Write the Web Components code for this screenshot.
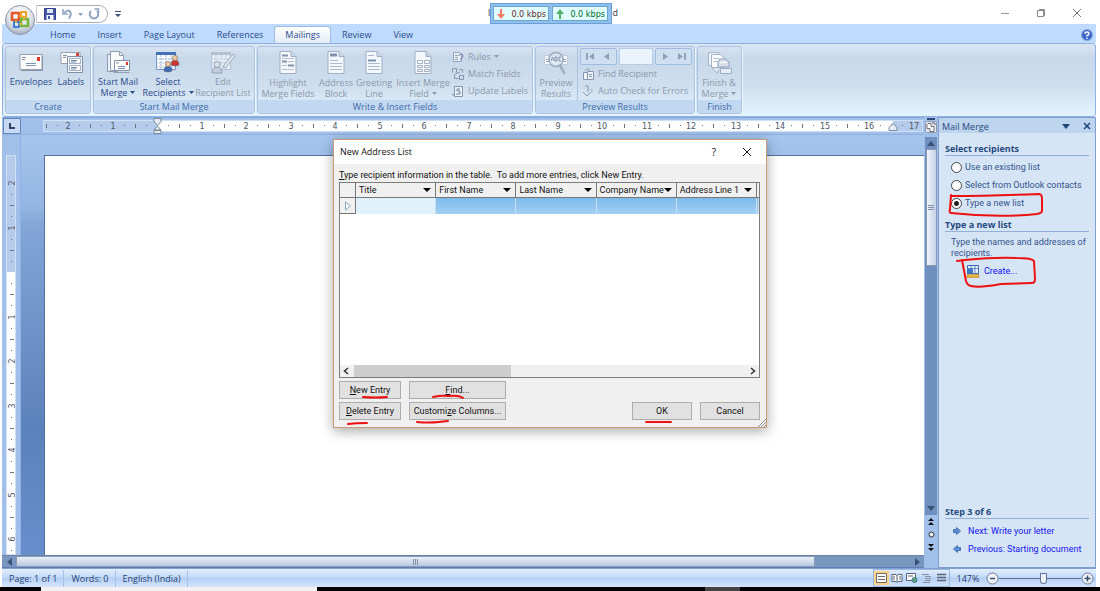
<!DOCTYPE html>
<html lang="en">
<head>
<meta charset="utf-8">
<title>Mail Merge</title>
<style>
	html, body {
		margin: 0;
		height: 100%;
		overflow: hidden;
		background: #fff;
	}
</style>
</head>
<body>
<word-app></word-app>

<script>
// Wraps a drawing in an svg of the given size
function svg(w, h, body) {
	return `<svg width="${w}" height="${h}" viewBox="0 0 ${w} ${h}" fill="none" aria-hidden="true">${body}</svg>`;
}

const person = (x, y, c) => `
	<path d="M${x - 4} ${y + 9}q0-5 4-5t4 5q-4 2-8 0z" fill="${c}" stroke="#55657f" stroke-width=".6"/>
	<circle cx="${x}" cy="${y + 2}" r="2.6" fill="#f0c9a4" stroke="#7a6250" stroke-width=".6"/>`;

const paper = (lines) => `
	<path d="M4 1.500h11l5 5v17h-16z" fill="#f4f7fb" stroke="#9fb0c6"/>
	<path d="M15 1.500v5h5" fill="#c9d6e6" stroke="#9fb0c6"/>${lines}`;

const icons = {
	envelopes: svg(26, 24, `
		<path d="M2 4.500h22v15h-22z" fill="#fbfbfc" stroke="#96a0ae"/><path d="M3 20.500h21.500v-14" stroke="#8293a8"/>
		<path d="M4 7.500h4M4 9.500h3M8 13.500h10M8 15.500h10" stroke="#7d93b2"/><path d="M19 7h3v4h-3z" fill="#e23b2e"/>`),
	labels: svg(26, 24, `
		<path d="M3 2.500h19v11h-19z" fill="#fbfbfc" stroke="#96a0ae"/><path d="M18 3h3v3h-3z" fill="#d8453b"/>
		<path d="M5 5.500h4M5 7.500h3" stroke="#7d93b2"/>
		<path d="M9.500 6.500h15v16h-15z" fill="#f3f6fa" stroke="#7f90a8"/>
		<path d="M11.500 8.500h11v5h-11zM11.500 15.500h11v5h-11z" fill="#fff" stroke="#a2b0c3"/>
		<path d="M13 10.500h6M13 12h5M13 17.500h6M13 19h5" stroke="#7188a8"/>`),
	startMerge: svg(26, 24, `
		<path d="M2.500 4.500h10v17h-10z" fill="#eef2f7" stroke="#8d9bb0"/>
		<path d="M5.500 1.500h9l4 4v15h-13z" fill="#f8fafc" stroke="#8d9bb0"/><path d="M14.500 1.500v4h4" stroke="#8d9bb0"/>
		<path d="M9.500 10.500h15v10h-15z" fill="#fff" stroke="#8290a3"/><path d="M8.500 22.500h16" stroke="#8fa2ba"/>
		<path d="M21 12h2v3h-2z" fill="#e23b2e"/><path d="M11 13h3M13 16.500h7M13 18.500h7" stroke="#7d93b2"/>`),
	select: svg(26, 24, `
		<path d="M1.500 2.500h19v17h-19z" fill="#fff" stroke="#7394c6"/><path d="M1 2h20v3h-20z" fill="#4571b9"/>
		<path d="M1 9h20M1 13h20M1 17h20M6 5v14M11 5v14M16 5v14" stroke="#9ab4da" stroke-dasharray="2 1"/>
		${person(20, 6, '#c9372d')}${person(13, 12, '#3f6cb4')}`),
	edit: svg(26, 24, `
		<path d="M1.500 2.500h19v17h-19z" fill="#e4ecf5" stroke="#b3c0d2"/><path d="M1 2h20v3h-20z" fill="#b3c0d2"/>
		<path d="M1 9h20M1 13h20M6 5v14M11 5v14M16 5v14" stroke="#bccada" stroke-dasharray="2 1"/>
		<path d="M23 4l2 2-9 11-3 1 1-3z" fill="#e2e8ef" stroke="#9aa9bd"/>
		<path d="M2 23q0-6 5-6t5 6z" fill="#c3cedd" stroke="#93a3b9"/><circle cx="7" cy="14.500" r="3" fill="#d8e0ea" stroke="#93a3b9"/>`),
	highlight: svg(24, 25, paper('<path d="M6 5.500h6M6 11.500h5M12 15.500h6" stroke="#8494ac" stroke-width="2"/><path d="M6 8.500h12M12 11.500h6M6 15.500h5M6 19.500h12" stroke="#b7c2d1"/>')),
	address: svg(24, 25, paper('<path d="M6 5h7" stroke="#7f90ab" stroke-width="3"/><path d="M6 10.500h8M6 13.500h12M6 16.500h12M6 19.500h12" stroke="#b0bbca"/>')),
	greeting: svg(24, 25, paper('<path d="M6 10.500h8" stroke="#7f90ab" stroke-width="2"/><path d="M6 5.500h6M6 13.500h12M6 16.500h12M6 19.500h12" stroke="#b0bbca"/>')),
	field: svg(24, 25, paper('<path d="M6.500 10.500h5v3h-5zM13.500 10.500h5v3h-5zM6.500 15.500h5v2h-5zM13.500 15.500h5v2h-5zM6.500 19.500h5v2h-5zM13.500 19.500h5v2h-5z" fill="#fff" stroke="#a3b1c4"/>')),
	preview: svg(26, 25, `
		<path d="M1.500 5.500h23v9h-23z" fill="#f0f4f9" stroke="#c2cddc"/><path d="M3 9.500h4M19 9.500h4M3 11.500h3M20 11.500h3" stroke="#97a5b8"/>
		<path d="M17 15l4 8" stroke="#a6b4c6" stroke-width="3" stroke-linecap="round"/>
		<circle cx="13" cy="9.500" r="7" fill="#dbe7f3" fill-opacity=".8" stroke="#9aaabe" stroke-width="1.500"/>
		<path d="M8 11l1.500-4 1.500 4M12 7v4h2v-4h-2M18 7h-2v4h2" stroke="#8594aa"/>`),
	finish: svg(26, 25, `
		<path d="M2.500 2.500h10v13h-10z" fill="#f1f5fa" stroke="#a5b4c8"/>
		<path d="M5.500 4.500h9l4 4v9h-13z" fill="#f7f9fc" stroke="#a5b4c8"/>
		<path d="M7.500 8.500h6M7.500 11.500h5" stroke="#b7c2d1"/>
		<path d="M12 12l2-3h6l3 3v5h-11z" fill="#d5deea" stroke="#92a3b9"/><path d="M14 12.500h7" stroke="#fff"/>
		<path d="M6 18l5 5 2-3M14.500 18.500h11v5h-11z" fill="#e6edf5" stroke="#9badc3"/>`),
	rules: svg(12, 12, '<path d="M1.500 1.500h6l2 2v7h-8z" fill="#e9eff6" stroke="#93a4bb"/><path d="M3 4.500h3M3 6.500h3M3 8.500h3" stroke="#93a4bb"/><path d="M7 5q0-2 2-2t2 2-2 2v2" stroke="#6d80a0"/>'),
	match: svg(12, 12, '<path d="M.5 4.500v-4h4v4M7.500 1.500h3v3M2.500 6.500v4h4M7.500 7.500h4v4h-4z" stroke="#8597b0"/><path d="M3 6l5-2" stroke="#8597b0"/>'),
	update: svg(12, 12, '<path d="M2.500 1.500h8v10h-8z" fill="#eef3f9" stroke="#8597b0"/><path d="M8 4h-3v2h3v3h-4M0 9l3 2" stroke="#6d80a0"/>'),
	find: svg(12, 12, '<path d="M1.500 4.500h4v7h-4zM5.500 3.500h6v8h-6z" fill="#eef3f9" stroke="#8597b0"/><path d="M3 3q3-4 5 0M7 6.500h3M7 8.500h3" stroke="#8597b0"/>'),
	check: svg(12, 12, '<path d="M3 1h3v6M1 7l4 4 5-5" stroke="#8597b0"/><path d="M6 4.500h4v3" stroke="#b0bdce"/>'),
	first: svg(10, 9, '<path d="M1 1h2v7h-2zM9 1v7l-5-3.500z" fill="#8fa0b8"/>'),
	prev: svg(10, 9, '<path d="M7 1v7l-5-3.500z" fill="#8fa0b8"/>'),
	next: svg(10, 9, '<path d="M3 1v7l5-3.500z" fill="#8fa0b8"/>'),
	last: svg(10, 9, '<path d="M1 1v7l5-3.500zM7 1h2v7h-2z" fill="#8fa0b8"/>'),
	caret: svg(5, 3, '<path d="M0 0h5l-2.500 3z" fill="currentColor"/>'),
	save: svg(12, 12, '<path d="M.5.5h11v11h-11z" fill="#4553a8" stroke="#333f8d"/><path d="M3 1h6v4h-6z" fill="#dfe6f5"/><path d="M2.500 7h7v5h-7z" fill="#f5f6fb"/><path d="M4 8h2v3h-2z" fill="#4553a8"/>'),
	undo: svg(12, 12, '<path d="M2 1v5h5" stroke="#8fa3c2" stroke-width="1.500"/><path d="M3 5q4-4 6-1.500t-1 7" stroke="#8fa3c2" stroke-width="2"/>'),
	redo: svg(12, 12, '<path d="M3 3a4.300 4.300 0 1 0 6 0" stroke="#8fa3c2" stroke-width="2"/><path d="M6.500 1h4v4" stroke="#8fa3c2" stroke-width="1.500"/>'),
	more: svg(6, 8, '<path d="M0 1h6v1h-6zM0 4h6l-3 3z" fill="#3d4f86"/>'),
	orb: svg(32, 32, `
		<defs><radialGradient id="orb" cx=".5" cy=".3" r=".75"><stop offset="0" stop-color="#fff"/><stop offset=".6" stop-color="#dbe0e8"/><stop offset="1" stop-color="#9ba6b8"/></radialGradient></defs>
		<circle cx="16" cy="16" r="14.500" fill="url(#orb)" stroke="#8b95a7"/>
		<g stroke-width="2.600" stroke-linejoin="round">
		<rect x="8" y="9" width="7" height="7" stroke="#e2572b"/><rect x="17" y="8" width="5" height="5" stroke="#f4a12c" stroke-width="2"/>
		<rect x="10" y="18" width="5" height="5" stroke="#3f7fd0" stroke-width="2"/><rect x="17" y="15" width="7" height="7" stroke="#74b53c"/></g>
		<path d="M15 12h4M20 13v4M12 16v3M15 20h3" stroke="#f0b43a" stroke-width="1.500"/>`),
	down: svg(8, 10, '<path d="M3 0h2v5h3l-4 5-4-5h3z" fill="#ef7b66"/>'),
	up: svg(8, 10, '<path d="M3 10h2v-5h3l-4-5-4 5h3z" fill="#52b36c"/>'),
	minimize: svg(10, 10, '<path d="M1 5.500h8" stroke="#9a9a9a"/>'),
	restore: svg(10, 10, '<path d="M1.500 2.500h6v6h-6zM3.500 2.500v-1h5v6h-1" stroke="#888"/>'),
	close: svg(10, 10, '<path d="M1 1l8 8M9 1l-8 8" stroke="#777"/>'),
	help: svg(12, 12, '<circle cx="6" cy="6" r="5.500" fill="#3c68c9" stroke="#8aa6e0"/><path d="M4 5q0-2 2-2t2 1.500-2 2v1M6 8.500v1.500" stroke="#fff" stroke-width="1.300"/>'),
	tabStop: svg(10, 10, '<path d="M3 2v5h5" stroke="#31456b" stroke-width="2"/>'),
	lookup: svg(12, 12, '<rect x=".5" y=".5" width="11" height="11" rx="1" fill="#e3e6ec" stroke="#8d99ab"/><path d="M3 2.500h3v3h3v5h-4v-3h-3v-4z" fill="#fff" stroke="#6c6f78"/><path d="M7 2h3v2" stroke="#6c6f78"/>'),
	rightTri: svg(8, 10, '<path d="M1.500 1v8l5-4z" fill="#fff" stroke="#8ca5bd"/>'),
	paneArrow: svg(8, 5, '<path d="M0 0h8l-4 5z" fill="#1e4378"/>'),
	paneClose: svg(8, 8, '<path d="M1 1l6 6M7 1l-6 6" stroke="#1e4378" stroke-width="1.500"/>'),
	create: svg(14, 14, '<path d="M1.500 1.500h11v8h-11z" fill="#e7f0fb" stroke="#3466b1"/><path d="M1 4.500h12M5 2v8M9 2v8" stroke="#5f8ac9"/><path d="M1 5h6v5h-6z" fill="#3f77c7"/><path d="M1 10.500h12v3h-12z" fill="#e8b33a" stroke="#b1822a" stroke-width=".5"/>'),
	goNext: svg(8, 8, '<path d="M.5 2.500h3v-2l4 3.500-4 3.500v-2h-3z" fill="#5b8bd0" stroke="#4573b8"/>'),
	goPrev: svg(8, 8, '<path d="M7.500 2.500h-3v-2l-4 3.500 4 3.500v-2h3z" fill="#5b8bd0" stroke="#4573b8"/>'),
	vPrint: svg(12, 10, '<path d="M.5.500h10v9h-10z" fill="#fff" stroke="#6d6a62"/><path d="M2 3.500h7M2 6.500h7" stroke="#6d6a62"/>'),
	vRead: svg(12, 10, '<path d="M1 1.500h4l1 1 1-1h4v7h-4l-1 1-1-1h-4zM6 2v7" fill="#fff" stroke="#54627a"/><path d="M2 4h2M2 6h2M8 4h2M8 6h2" stroke="#54627a"/>'),
	vWeb: svg(12, 10, '<path d="M.5.500h9v7h-9z" fill="#fff" stroke="#54627a"/><path d="M2 3h5" stroke="#54627a"/><circle cx="8.500" cy="7" r="2.500" fill="#5fa56c" stroke="#3d77a8"/>'),
	vOutline: svg(12, 10, '<path d="M1 1.500h7M4 3.500h6M4 5.500h6M4 7.500h6M2 9.500h7" stroke="#8490a3"/>'),
	vDraft: svg(12, 10, '<path d="M1 1.500h9M1 4.500h9M1 7.500h9" stroke="#5b6576" stroke-width="1.500"/>'),
	minus: svg(13, 13, '<circle cx="6.500" cy="6.500" r="5.500" fill="#eef3fa" stroke="#66789a"/><path d="M4 6.500h5" stroke="#3e4f70" stroke-width="1.500"/>'),
	plus: svg(13, 13, '<circle cx="6.500" cy="6.500" r="5.500" fill="#eef3fa" stroke="#66789a"/><path d="M3.500 6.500h6M6.500 3.500v6" stroke="#3e4f70" stroke-width="1.500"/>'),
	grip: svg(9, 9, '<path d="M1 9l8-8M4 9l5-5M7 9l2-2" stroke="#8f8f8f"/>'),
	chevL: svg(6, 8, '<path d="M5 1l-3.500 3 3.500 3" stroke="#333" stroke-width="1.500"/>'),
	chevR: svg(6, 8, '<path d="M1 1l3.500 3-3.500 3" stroke="#333" stroke-width="1.500"/>')
};

const base = `
	* { box-sizing: border-box; }
	button, input {
		font: inherit;
		color: inherit;
		margin: 0;
		padding: 0;
		border: 0;
		background: none;
	}
	svg { display: block; flex: none; }
`;

// Base class: puts the markup of the element in an open shadow root
class Part extends HTMLElement {
	constructor() {
		super();
		this.attachShadow({ mode: "open" });
	}

	connectedCallback() {
		const t = document.createElement("template");
		t.innerHTML = `<style>${base}${this.css()}</style>${this.html()}`;
		this.shadowRoot.replaceChildren(t.content.cloneNode(true));
	}
}

class TitleBar extends Part {
	css() {
		return `
		:host {
			display: grid;
			grid-template-columns: 1fr auto 1fr;
			height: 24px;
			padding-left: 8px;
			background: #fff;
		}
		.quick {
			display: flex;
			align-items: center;
			align-self: start;
			height: 20px;
			margin: 4px 0 0 26px;
		}
		.tools {
			display: flex;
			align-items: center;
			gap: 5px;
			height: 18px;
			padding: 0 7px;
			border: 1px solid #a9adb6;
			border-left-color: #c9ccd2;
			border-radius: 0 9px 9px 0;
			color: #8fa3c2;
			margin-right: 7px;
		}
		.title {
			display: flex;
			align-items: center;
			color: #333;
			font-size: 9px;
		}
		.net {
			display: flex;
			gap: 3px;
			margin-top: 3px;
			padding: 2px 3px 2px 2px;
			border: 1px solid #6ba0d6;
			background: #8fc0ee;
			font: 9px/14px "DejaVu Sans Condensed", sans-serif;
		}
		.net span {
			display: flex;
			align-items: center;
			gap: 6px;
			width: 56px;
			height: 15px;
			padding-left: 3px;
			border: 1px solid #6ea3c9;
			background: #e0feff;
			color: #6d2a2a;
			white-space: nowrap;
		}
		.net span + span { color: #0b6a1e; }
		.win {
			display: flex;
			justify-content: flex-end;
			gap: 26px;
			padding: 8px 14px 0 0;
		}
		.win button { height: 10px; }`;
	}
	html() {
		return `
		<div class="quick">
			<div class="tools">
				<button aria-label="Save">${icons.save}</button>
				<button aria-label="Undo">${icons.undo}</button>
				<button aria-label="Undo list">${icons.caret}</button>
				<button aria-label="Redo">${icons.redo}</button>
			</div>
			<button aria-label="Customize toolbar">${icons.more}</button>
		</div>
		<div class="title">l<div class="net"><span>${icons.down}0.0 kbps</span><span>${icons.up}0.0 kbps</span></div>d</div>
		<div class="win">
			<button aria-label="Minimize">${icons.minimize}</button>
			<button aria-label="Restore">${icons.restore}</button>
			<button aria-label="Close">${icons.close}</button>
		</div>`;
	}
}

class TabStrip extends Part {
	css() {
		return `
		:host {
			display: flex;
			align-items: flex-end;
			height: 19px;
			padding: 0 2px 0 37px;
			background: #bfdbff;
			color: #2a4b8c;
			font-size: 9px;
		}
		button {
			height: 17px;
			padding: 0 10px;
			line-height: 16px;
			border: 1px solid transparent;
			border-bottom: 0;
		}
		button.on {
			background: linear-gradient(#fff, #e3ecf6);
			border-color: #9dbbe4;
			border-radius: 3px 3px 0 0;
		}
		.help {
			margin-left: auto;
			padding: 0;
		}`;
	}
	html() {
		const tabs = this.getAttribute("tabs").split(",");
		const on = this.getAttribute("selected");
		return tabs.map(t => `<button class="${t == on ? "on" : ""}">${t}</button>`).join("") +
			`<button class="help" aria-label="Help">${icons.help}</button>`;
	}
}

class RibbonGroup extends Part {
	css() {
		return `
		:host {
			display: flex;
			flex-direction: column;
			flex: none;
			border: 1px solid #a9c3e2;
			border-radius: 3px;
			box-shadow: 1px 1px 0 #eef5fc;
			overflow: hidden;
		}
		.items {
			display: flex;
			flex: 1;
			min-height: 0;
		}
		.label {
			flex: none;
			height: 13px;
			line-height: 13px;
			text-align: center;
			background: #c1d8f0;
			color: #3e6aaa;
		}`;
	}
	html() {
		return `<div class="items"><slot></slot></div><div class="label">${this.getAttribute("label")}</div>`;
	}
}

class RibbonButton extends Part {
	css() {
		return `
		:host { display: block; flex: none; color: #2a4b8c; }
		:host([off]) { color: #8c99ab; }
		button {
			display: flex;
			flex-direction: column;
			align-items: center;
			width: 100%;
			padding-top: 3px;
			line-height: 11px;
			white-space: nowrap;
		}
		.text { margin-top: 2px; }
		.row { display: flex; align-items: center; justify-content: center; gap: 3px; }
		:host([small]) button { flex-direction: row; gap: 4px; padding: 0; height: 17px; }
		:host([small]) .text { margin: 0; }`;
	}
	html() {
		const lines = this.getAttribute("text").split("|");
		const caret = this.hasAttribute("menu") ? icons.caret : "";
		const text = lines.map((l, i) =>
			`<span class="row">${l}${i == lines.length - 1 ? caret : ""}</span>`).join("");
		return `<button ${this.hasAttribute("off") ? "disabled" : ""}>${icons[this.getAttribute("icon")]}<span class="text">${text}</span></button>`;
	}
}

class RibbonBar extends Part {
	css() {
		return `
		:host {
			display: flex;
			gap: 2px;
			height: 74px;
			padding: 2px;
			border: 1px solid #8db2e3;
			border-radius: 3px;
			background: linear-gradient(#dbe6f3, #c7d8ea 20%, #d0dfef 60%, #e3f3fe);
			font-size: 9px;
		}
		.stack { display: flex; flex-direction: column; padding-top: 1px; }
		.nav {
			display: flex;
			gap: 2px;
			height: 17px;
			margin-left: -2px;
		}
		.pair {
			display: flex;
			width: 37px;
			justify-content: space-around;
			align-items: center;
			border: 1px solid #9fbbdf;
			border-radius: 2px;
			background: #cfdff2;
		}
		.nav input {
			width: 34px;
			background: #eaf2fb;
			border: 1px solid #b5cbe6;
		}
		.find { padding-left: 4px; border-left: 1px solid #a9c3e2; margin-left: 1px; }`;
	}
	html() {
		return `
		<ribbon-group label="Create" style="width:86px">
			<ribbon-button icon="envelopes" text="Envelopes" style="width:50px"></ribbon-button>
			<ribbon-button icon="labels" text="Labels" style="width:30px"></ribbon-button>
		</ribbon-group>
		<ribbon-group label="Start Mail Merge" style="width:162px">
			<ribbon-button icon="startMerge" text="Start Mail|Merge" menu style="width:48px"></ribbon-button>
			<ribbon-button icon="select" text="Select|Recipients" menu style="width:52px"></ribbon-button>
			<ribbon-button icon="edit" text="Edit|Recipient List" off style="width:58px"></ribbon-button>
		</ribbon-group>
		<ribbon-group label="Write &amp; Insert Fields" style="width:276px">
			<ribbon-button icon="highlight" text="Highlight|Merge Fields" off style="width:60px"></ribbon-button>
			<ribbon-button icon="address" text="Address|Block" off style="width:36px"></ribbon-button>
			<ribbon-button icon="greeting" text="Greeting|Line" off style="width:40px"></ribbon-button>
			<ribbon-button icon="field" text="Insert Merge|Field" menu off style="width:58px"></ribbon-button>
			<div class="stack">
				<ribbon-button icon="rules" text="Rules" menu off small></ribbon-button>
				<ribbon-button icon="match" text="Match Fields" off small></ribbon-button>
				<ribbon-button icon="update" text="Update Labels" off small></ribbon-button>
			</div>
		</ribbon-group>
		<ribbon-group label="Preview Results" style="width:160px">
			<ribbon-button icon="preview" text="Preview|Results" off style="width:40px"></ribbon-button>
			<div class="stack find">
				<div class="nav">
					<span class="pair"><button aria-label="First record">${icons.first}</button><button aria-label="Previous record">${icons.prev}</button></span>
					<input aria-label="Record">
					<span class="pair"><button aria-label="Next record">${icons.next}</button><button aria-label="Last record">${icons.last}</button></span>
				</div>
				<ribbon-button icon="find" text="Find Recipient" off small></ribbon-button>
				<ribbon-button icon="check" text="Auto Check for Errors" off small></ribbon-button>
			</div>
		</ribbon-group>
		<ribbon-group label="Finish" style="width:45px">
			<ribbon-button icon="finish" text="Finish &amp;|Merge" menu off style="width:42px"></ribbon-button>
		</ribbon-group>`;
	}
}

// Centimetre scale. zero = where the text starts, end = right (or bottom) margin
class RulerScale extends Part {
	css() {
		return `
		:host {
			display: block;
			overflow: hidden;
			background: #b4cbec;
			border: 1px solid #cfe0f6;
		}
		svg { font: 8px "DejaVu Sans", sans-serif; }`;
	}
	html() {
		const vertical = this.hasAttribute("vertical");
		const zero = Number(this.getAttribute("zero"));
		const end = Number(this.getAttribute("end"));
		const unit = 44.5;
		const from = Number(this.getAttribute("from"));
		const to = Number(this.getAttribute("to"));
		let out = vertical ? `<rect x="0" y="${zero}" width="10" height="${end - zero}" fill="#fff"/>`
			: `<rect x="${zero}" y="0" width="${end - zero}" height="10" fill="#fff"/>`;
		for (let q = from * 4; q <= to * 4; q++) {
			const p = Math.round(zero + q * unit / 4);
			if (q == 0) continue;
			if (q % 4 == 0) {
				const n = Math.abs(q / 4);
				out += vertical
					? `<text transform="translate(8 ${p}) rotate(-90)" text-anchor="middle" fill="#4d5766">${n}</text>`
					: `<text x="${p}" y="8" text-anchor="middle" fill="#4d5766">${n}</text>`;
			} else {
				const len = q % 2 == 0 ? 4 : 1;
				out += vertical
					? `<rect x="${5 - len / 2 | 0}" y="${p}" width="${len}" height="1" fill="#6b7484"/>`
					: `<rect x="${p}" y="${5 - len / 2 | 0}" width="1" height="${len}" fill="#6b7484"/>`;
			}
		}
		if (!vertical) {
			out += `<path d="M${end - 4} 9.500v-3l4-4 4 4v3z" fill="#e6edf7" stroke="#7b8799"/>`;
		}
		return vertical ? svg(10, 400, out) : svg(900, 10, out);
	}
}

class DocumentView extends Part {
	css() {
		return `
		:host {
			display: flex;
			flex: 1;
			min-width: 0;
			background: #a1bfe8;
		}
		.main { display: flex; flex-direction: column; flex: 1; min-width: 0; }
		.top {
			position: relative;
			display: flex;
			align-items: center;
			height: 18px;
			border-top: 1px solid #87a9d8;
			border-bottom: 1px solid #90b1de;
		}
		.tabstop {
			display: grid;
			place-items: center;
			width: 18px;
			height: 16px;
			margin-left: 1px;
			border: 1px solid #6486c0;
			background: #c8daf3;
		}
		.top ruler-scale { flex: 1; height: 12px; margin: 0 1px 0 22px; }
		.indent { position: absolute; left: 151px; top: 0; }
		.body { display: flex; flex: 1; min-height: 0; }
		.side {
			width: 19px;
			padding: 20px 4px 0 4px;
			background: #a1bfe8;
			border-right: 1px solid #8bb5ea;
		}
		.side ruler-scale { height: 100%; }
		.desk {
			display: flex;
			flex: 1;
			padding: 20px 0 0 23px;
			background: linear-gradient(#a6c5ee, #94b5e2 17%, #82a5d6 22%, #5b82ba 70%, #668fcb);
		}
		.page {
			flex: 1;
			border: 1px solid #56709a;
			border-width: 1px 0 0 1px;
			background: #fff;
		}
		.hscroll {
			display: flex;
			align-items: center;
			height: 13px;
			border-top: 1px solid #6d83a6;
			border-bottom: 1px solid #5f7fb4;
			background: #7896c0;
			color: #3a5074;
		}
		.hscroll .thumb {
			flex: 0 1 799px;
			height: 11px;
			border: 1px solid #8a9ab4;
			background: linear-gradient(#e9f0f8, #b9c9e0);
			display: grid;
			place-items: center;
		}
		.hscroll .arrow { width: 14px; display: grid; place-items: center; }
		.hscroll .thumb + .arrow { margin-left: auto; }
		.vscroll {
			display: flex;
			flex-direction: column;
			align-items: center;
			width: 14px;
			background: #a1c0ea;
			color: #3a5074;
		}
		.split { width: 8px; height: 2px; margin: 1px 0; background: #2e4a7a; }
		.track {
			display: flex;
			flex-direction: column;
			align-items: center;
			width: 12px;
			height: 378px;
			margin-top: 4px;
			padding: 4px 0;
			background: #6f90bf;
		}
		.track .thumb {
			display: grid;
			place-items: center;
			width: 11px;
			height: 117px;
			margin-top: 3px;
			border: 1px solid #8a9ab4;
			background: linear-gradient(90deg, #eff4fb, #c5d2e6);
		}
		.track .arrow:last-child { margin-top: auto; }
		.browse { display: flex; flex-direction: column; gap: 5px; padding-top: 2px; }
		.browse button { display: grid; place-items: center; height: 8px; }`;
	}
	html() {
		const v = (d) => svg(8, 5, `<path d="${d}" fill="currentColor"/>`);
		return `
		<div class="main">
			<div class="top">
				<button class="tabstop" aria-label="Tab stop">${icons.tabStop}</button>
				<ruler-scale zero="113" end="849" from="-2.500" to="17"></ruler-scale>
				<div class="indent">${svg(9, 17, '<path d="M1 .5h7v3l-3.500 4-3.500-4zM4.500 8l3.500 4h-7zM1 12.500h7v3h-7z" fill="#e6edf7" stroke="#7b8799"/>')}</div>
			</div>
			<div class="body">
				<div class="side"><ruler-scale vertical zero="116" end="400" from="-2" to="6.250"></ruler-scale></div>
				<div class="desk"><div class="page"></div></div>
			</div>
			<div class="hscroll">
				<button class="arrow" aria-label="Scroll left">${svg(5, 8, '<path d="M5 0v8l-5-4z" fill="currentColor"/>')}</button>
				<div class="thumb">${svg(6, 6, '<path d="M.5 0v6M2.500 0v6M4.500 0v6" stroke="#8292ab"/>')}</div>
				<button class="arrow" aria-label="Scroll right">${svg(5, 8, '<path d="M0 0v8l5-4z" fill="currentColor"/>')}</button>
			</div>
		</div>
		<div class="vscroll">
			<div class="split"></div>
			<button aria-label="View ruler">${icons.lookup}</button>
			<div class="track">
				<button class="arrow" aria-label="Scroll up">${v("M0 5h8l-4-5z")}</button>
				<div class="thumb">${svg(6, 6, '<path d="M0 .5h6M0 2.500h6M0 4.500h6" stroke="#8292ab"/>')}</div>
				<button class="arrow" aria-label="Scroll down">${v("M0 0h8l-4 5z")}</button>
			</div>
			<div class="browse">
				<button aria-label="Previous page">${svg(6, 7, '<path d="M0 3l3-3 3 3zM0 7l3-3 3 3z" fill="#111"/>')}</button>
				<button aria-label="Select browse object">${svg(7, 7, '<circle cx="3.500" cy="3.500" r="2.500" fill="#e8eef0" stroke="#333"/>')}</button>
				<button aria-label="Next page">${svg(6, 7, '<path d="M0 0l3 3 3-3zM0 4l3 3 3-3z" fill="#111"/>')}</button>
			</div>
		</div>`;
	}
}

class TaskPane extends Part {
	css() {
		return `
		:host {
			display: flex;
			flex-direction: column;
			flex: none;
			width: 158px;
			border: 1px solid #7f9fd0;
			background: #d6e5f5;
			color: #34548c;
			font: 9px/11px Roboto, sans-serif;
		}
		header {
			display: flex;
			align-items: center;
			gap: 13px;
			height: 15px;
			padding: 1px 4px 0 3px;
			background: #bdd4ee;
			color: #2a4b80;
			font: 9px/15px "Open Sans", sans-serif;
		}
		header span { flex: 1; }
		section { padding: 0 6px; }
		h2 {
			margin: 0;
			border-bottom: 1px solid #93b0d9;
			color: #1f497d;
			font: bold 9px/12px "Open Sans", sans-serif;
		}
		.first { padding-top: 10px; }
		label {
			display: flex;
			align-items: center;
			gap: 3px;
			height: 18px;
			padding-left: 6px;
		}
		input {
			appearance: none;
			width: 11px;
			height: 11px;
			border: 1px solid #444;
			border-radius: 50%;
			background: #fff;
		}
		input:checked { background: radial-gradient(circle, #222 0 2px, #fff 3px); }
		.choices { margin: 2px 0 7px; }
		p { margin: 5px 0 0 6px; }
		a {
			display: flex;
			align-items: center;
			gap: 7px;
			height: 18px;
			padding-left: 8px;
			color: #1414f0;
			text-decoration: none;
		}
		a.create { margin: 3px 0 0 13px; gap: 4px; }
		.steps { margin-top: auto; padding-bottom: 9px; }
		.steps a:first-of-type { margin-top: 3px; }`;
	}
	html() {
		return `
		<header><span>Mail Merge</span><button aria-label="Pane menu">${icons.paneArrow}</button><button aria-label="Close pane">${icons.paneClose}</button></header>
		<section class="first">
			<h2>Select recipients</h2>
			<div class="choices">
				<label><input type="radio" name="source">Use an existing list</label>
				<label><input type="radio" name="source">Select from Outlook contacts</label>
				<label><input type="radio" name="source" checked>Type a new list</label>
			</div>
		</section>
		<section>
			<h2>Type a new list</h2>
			<p>Type the names and addresses of recipients.</p>
			<a class="create" href="#">${icons.create}Create...</a>
		</section>
		<section class="steps">
			<h2>Step 3 of 6</h2>
			<a href="#">${icons.goNext}Next: Write your letter</a>
			<a href="#">${icons.goPrev}Previous: Starting document</a>
		</section>`;
	}
}

class AddressDialog extends Part {
	css() {
		return `
		:host {
			display: flex;
			flex-direction: column;
			width: 434px;
			height: 289px;
			border: 1px solid #c79b76;
			background: #f0f0f0;
			box-shadow: 0 3px 12px rgba(0, 0, 0, 0.35);
			color: #111;
			font: 9px/11px Roboto, sans-serif;
		}
		header {
			display: flex;
			align-items: center;
			gap: 26px;
			height: 24px;
			padding: 0 14px 0 6px;
			background: #fff;
			font: 9px/24px "Open Sans", sans-serif;
		}
		header span { flex: 1; }
		header button { font-size: 10px; }
		.content {
			display: flex;
			flex-direction: column;
			flex: 1;
			padding: 6px 6px 7px 5px;
		}
		p { margin: 0; white-space: pre; }
		.grid {
			display: flex;
			flex-direction: column;
			flex: 1;
			margin: 1px 0 2px;
			border: 1px solid #7c7c7c;
			background: #fff;
		}
		table {
			width: 100%;
			table-layout: fixed;
			border-collapse: separate;
			border-spacing: 0;
		}
		th {
			height: 15px;
			padding: 0 4px 0 3px;
			border: 1px solid #777;
			border-width: 0 1px 1px 0;
			background: #f0f0f0;
			font-weight: normal;
			text-align: left;
		}
		th div { display: flex; align-items: center; justify-content: space-between; white-space: nowrap; }
		td {
			height: 16px;
			padding: 0;
			border-right: 1px solid #c5dff5;
			background: linear-gradient(#7dbaea, #a3d0f3);
		}
		td:nth-child(2) { background: #e1f1fc; }
		td:first-child {
			background: #f0f0f0;
			border: 1px solid #777;
			border-width: 0 1px 1px 0;
			padding-left: 4px;
		}
		th:last-child { padding: 0; border-right: 0; }
		.bar {
			display: flex;
			align-items: center;
			height: 12px;
			margin-top: auto;
			padding: 0 3px;
			background: #f0f0f0;
		}
		.bar div { width: 157px; height: 12px; margin: 0 auto 0 5px; background: #cdcdcd; }
		.buttons {
			display: grid;
			grid-template-columns: 62px 97px 1fr 60px 60px;
			column-gap: 8px;
			margin-top: 1px;
		}
		.buttons + .buttons { margin-top: 3px; }
		.buttons button {
			height: 18px;
			border: 1px solid #adadad;
			background: #e1e1e1;
			white-space: nowrap;
		}
		.ok { grid-column: 4; }
		footer { display: flex; justify-content: flex-end; margin: -9px 0 0; }`;
	}
	html() {
		const cols = ["Title", "First Name", "Last Name", "Company Name", "Address Line 1"];
		const arrow = svg(8, 4, '<path d="M0 0h8l-4 4z" fill="#000"/>');
		return `
		<header>
			<span>New Address List</span>
			<button aria-label="Help">?</button>
			<button aria-label="Close">${icons.close.replace("#777", "#111")}</button>
		</header>
		<div class="content">
			<p><u>T</u>ype recipient information in the table.  To add more entries, click New Entry.</p>
			<div class="grid">
				<table>
					<colgroup><col style="width:16px"><col><col><col><col><col><col style="width:2px"></colgroup>
					<tr><th></th>${cols.map(c => `<th><div>${c}<button aria-label="Filter ${c}">${arrow}</button></div></th>`).join("")}<th></th></tr>
					<tr><td>${icons.rightTri}</td>${cols.map(() => "<td></td>").join("")}<td></td></tr>
				</table>
				<div class="bar">${icons.chevL}<div></div>${icons.chevR}</div>
			</div>
			<div class="buttons">
				<button><u>N</u>ew Entry</button>
				<button><u>F</u>ind...</button>
			</div>
			<div class="buttons">
				<button><u>D</u>elete Entry</button>
				<button>Customi<u>z</u>e Columns...</button>
				<button class="ok">OK</button>
				<button>Cancel</button>
			</div>
		</div>
		<footer>${icons.grip}</footer>`;
	}
}

class StatusBar extends Part {
	css() {
		return `
		:host {
			display: flex;
			align-items: center;
			height: 19px;
			background: linear-gradient(#e3eefc, #c4daf8 45%, #b3cff5 50%, #d5e5fb);
			border-top: 1px solid #7fa0d0;
			color: #24406f;
			font-size: 9px;
		}
		.cell {
			height: 17px;
			line-height: 17px;
			padding: 0 6px 0 7px;
			border-right: 1px solid #a3c1ea;
		}
		.views {
			display: flex;
			margin-left: auto;
			padding: 1px 0;
			border: 1px solid #9cb8df;
		}
		.views button { display: grid; place-items: center; width: 15px; height: 14px; }
		.views button.on { background: #fbd28b; }
		.zoom { width: 36px; text-align: center; }
		input {
			appearance: none;
			width: 82px;
			height: 13px;
			background: linear-gradient(#5f7396, #5f7396) center / 100% 1px no-repeat;
		}
		input::-webkit-slider-thumb {
			appearance: none;
			width: 7px;
			height: 11px;
			border: 1px solid #5f7396;
			border-radius: 1px 1px 4px 4px;
			background: #eef3fa;
		}
		.plus { margin-right: 2px; }`;
	}
	html() {
		return `
		<span class="cell">Page: 1 of 1</span>
		<span class="cell">Words: 0</span>
		<span class="cell">English (India)</span>
		<div class="views">
			<button class="on" aria-label="Print layout">${icons.vPrint}</button>
			<button aria-label="Full screen reading">${icons.vRead}</button>
			<button aria-label="Web layout">${icons.vWeb}</button>
			<button aria-label="Outline">${icons.vOutline}</button>
			<button aria-label="Draft">${icons.vDraft}</button>
		</div>
		<span class="zoom">147%</span>
		<button aria-label="Zoom out">${icons.minus}</button>
		<input type="range" aria-label="Zoom" min="0" max="100" value="55">
		<button class="plus" aria-label="Zoom in">${icons.plus}</button>`;
	}
}

// Freehand red pen marks over the window
class InkLayer extends Part {
	css() {
		return `
		:host { display: block; pointer-events: none; }`;
	}
	html() {
		return svg(1100, 591, `<g stroke="#ee1111" stroke-width="2" stroke-linecap="round" stroke-linejoin="round">
			<path d="M951 196q40 0 88-2 3 0 3 5v12q0 2-5 3-40 4-86-1-2 0-1-4l1-14"/>
			<path d="M957 261l8-1q30-3 52-2 15 0 17 3l1 18q0 4-3 4l-31 1q-22 4-30 2-4-1-5-5l-4-21"/>
			<path d="M363 397q12 1 24 0M433 397q8-2 16-1 10-1 14 2M348 424q8-1 19-1M417 422q12 1 22 0l9-1M646 422h25"/></g>`);
	}
}

class WordApp extends Part {
	css() {
		return `
		:host {
			position: relative;
			display: flex;
			flex-direction: column;
			height: 100vh;
			padding: 0 4px 0 2px;
			font-family: "Open Sans", sans-serif;
		}
		.work { display: flex; flex: 1; min-height: 0; }
		.orb { position: absolute; left: 4px; top: 4px; }
		address-dialog { position: absolute; left: 333px; top: 139px; }
		ink-layer { position: absolute; left: 0; top: 0; }
		.taskbar {
			display: flex;
			height: 4px;
			margin: 0 -4px 0 -2px;
			padding-left: 41px;
			background: #000;
		}
		.taskbar i { flex: 0 0 276px; background: #f2f2f2; }
		.taskbar i + i { flex-basis: 35px; margin-left: 388px; background: #444; }`;
	}
	html() {
		return `
		<title-bar></title-bar>
		<tab-strip tabs="Home,Insert,Page Layout,References,Mailings,Review,View" selected="Mailings"></tab-strip>
		<ribbon-bar></ribbon-bar>
		<div class="work">
			<document-view></document-view>
			<task-pane></task-pane>
		</div>
		<status-bar></status-bar>
		<div class="taskbar"><i></i><i></i></div>
		<button class="orb" aria-label="Office menu">${icons.orb}</button>
		<address-dialog></address-dialog>
		<ink-layer></ink-layer>`;
	}
}

customElements.define("title-bar", TitleBar);
customElements.define("tab-strip", TabStrip);
customElements.define("ribbon-group", RibbonGroup);
customElements.define("ribbon-button", RibbonButton);
customElements.define("ribbon-bar", RibbonBar);
customElements.define("ruler-scale", RulerScale);
customElements.define("document-view", DocumentView);
customElements.define("task-pane", TaskPane);
customElements.define("address-dialog", AddressDialog);
customElements.define("status-bar", StatusBar);
customElements.define("ink-layer", InkLayer);
customElements.define("word-app", WordApp);
</script>
</body>
</html>
